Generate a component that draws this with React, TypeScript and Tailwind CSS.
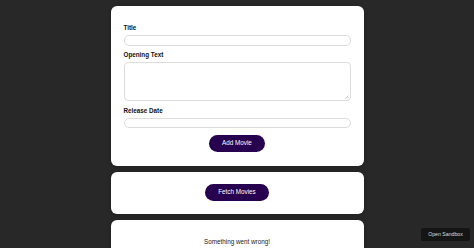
import * as React from "react"

const labelCls = "block font-bold text-[6.3px] leading-[7px] text-[#111] mb-[4px]"
const inputCls = "block w-full h-[10.5px] rounded-[5px] border border-[#dcdcdc] bg-white"

export default function App() {
  return (
    <div className="relative min-h-screen bg-[#282828] pt-[6px] font-['Liberation_Sans',Arial,sans-serif]">
      {/* Add movie form */}
      <section className="mx-auto w-[253px] rounded-[6px] bg-white px-[13px] pt-[18px] pb-[14px] shadow-[0_1px_4px_rgba(0,0,0,0.25)]">
        <div>
          <label className={labelCls}>Title</label>
          <div className={inputCls} />
        </div>
        <div className="mt-[5.5px]">
          <label className={labelCls}>Opening Text</label>
          <div className="relative h-[38.5px] w-full rounded-[4px] border border-[#dcdcdc] bg-white">
            <svg className="absolute right-[1px] bottom-[1px]" width="4" height="4" viewBox="0 0 4 4">
              <path d="M0.5 3.5 L3.5 0.5 M2 3.5 L3.5 2" stroke="#999" strokeWidth="0.5" />
            </svg>
          </div>
        </div>
        <div className="mt-[6px]">
          <label className={labelCls}>Release Date</label>
          <div className={inputCls} />
        </div>
        <div className="mt-[6.5px] flex justify-center">
          <button className="h-[17px] rounded-full bg-[#280050] px-[13px] text-[6.3px] text-white">
            Add Movie
          </button>
        </div>
      </section>

      {/* Fetch */}
      <section className="mx-auto mt-[6px] flex w-[253px] justify-center rounded-[6px] bg-white pt-[12px] pb-[13px] shadow-[0_1px_4px_rgba(0,0,0,0.25)]">
        <button className="h-[17px] rounded-full bg-[#280050] px-[13px] text-[6.3px] text-white">
          Fetch Movies
        </button>
      </section>

      {/* Results */}
      <section className="mx-auto mt-[6px] w-[253px] rounded-[6px] bg-white pt-[18px] pb-[18px] text-center shadow-[0_1px_4px_rgba(0,0,0,0.25)]">
        <p className="text-[6.3px] leading-[8px] text-[#222]">Something went wrong!</p>
      </section>

      <div className="fixed right-[4px] bottom-[7px] flex h-[13px] w-[49px] items-center justify-center rounded-[2px] bg-[#151515] text-[5.2px] text-[#ddd]">
        Open Sandbox
      </div>
    </div>
  )
}
